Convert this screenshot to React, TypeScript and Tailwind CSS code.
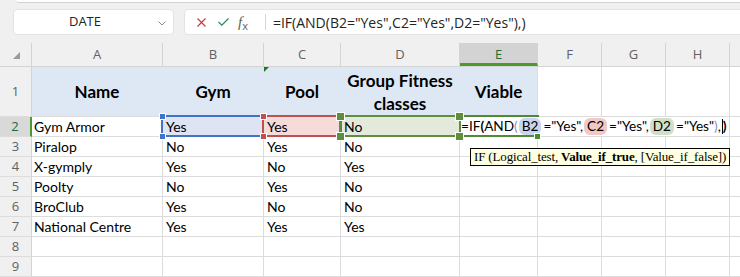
import React from "react";

const COLS = [
  { k: "A", w: "w-[131px]" },
  { k: "B", w: "w-[101px]" },
  { k: "C", w: "w-[77px]" },
  { k: "D", w: "w-[119px]" },
  { k: "E", w: "w-[78px]" },
  { k: "F", w: "w-[64px]" },
  { k: "G", w: "w-[64px]" },
  { k: "H", w: "w-[64px]" },
  { k: "", w: "w-[64px]" },
];

const DATA: string[][] = [
  ["Piralop", "No", "Yes", "No"],
  ["X-gymply", "Yes", "No", "Yes"],
  ["Poolty", "No", "Yes", "No"],
  ["BroClub", "Yes", "No", "No"],
  ["National Centre", "Yes", "Yes", "Yes"],
  [],
  [],
];

const cellFont = { fontFamily: "Lato, 'Noto Sans', sans-serif" };
const uiFont = { fontFamily: "'Open Sans', 'Noto Sans', sans-serif" };

function RowHead({ n, h, selected }: { n: number; h: string; selected?: boolean }) {
  return (
    <div
      className={`shrink-0 w-[32px] ${h} flex items-center justify-center text-[13px] border-b border-[#dcdcdc] ${
        selected
          ? "bg-[#d9d9d9] text-[#1d6b38] border-r-2 border-r-[#4a9a2c]"
          : "bg-[#f0f0f0] text-[#616161] border-r border-r-[#d4d4d4]"
      }`}
      style={uiFont}
    >
      {n}
    </div>
  );
}

function Square({ x, y, s, color }: { x: number; y: number; s: number; color: string }) {
  return (
    <div
      className="absolute border border-white"
      style={{ left: x - s / 2, top: y - s / 2, width: s, height: s, background: color }}
    />
  );
}

export default function App() {
  return (
    <div className="relative w-[740px] h-[277px] overflow-hidden bg-[#f0f0f0] text-black">
      {/* ribbon bottom edge */}
      <div className="h-[3px] ml-[16px] bg-white border-b border-[#d2d2d2] rounded-bl-[5px]" />

      {/* name box + formula bar */}
      <div className="flex items-start h-[40px] pt-[6px]">
        <div
          className="relative ml-[13px] w-[161px] h-[26px] shrink-0 bg-white rounded-[4px] border border-[#e3e3e3] flex items-center justify-center pr-[17px] text-[13px] text-[#242424]"
          style={uiFont}
        >
          DATE
          <svg className="absolute right-[7px] top-[11px]" width="8" height="5" viewBox="0 0 8 5">
            <polyline points="0.5,0.5 4,4 7.5,0.5" fill="none" stroke="#8a8a8a" strokeWidth="1" />
          </svg>
        </div>
        <div className="ml-[10px] w-[570px] h-[26px] shrink-0 bg-white rounded-[4px] border border-[#e3e3e3] flex items-center">
          <svg className="ml-[12px]" width="9" height="9" viewBox="0 0 9 9">
            <path d="M0.5 0.5 L8.5 8.5 M8.5 0.5 L0.5 8.5" stroke="#d13438" strokeWidth="1.1" fill="none" />
          </svg>
          <svg className="ml-[12px]" width="11" height="8" viewBox="0 0 11 8">
            <polyline points="0.5,4 3.8,7.2 10.5,0.5" stroke="#2f8a5a" strokeWidth="1.2" fill="none" />
          </svg>
          <span
            className="ml-[9px] text-[15px] italic text-[#616161] leading-none"
            style={{ fontFamily: "'Liberation Serif', serif" }}
          >
            f<span className="text-[11px] not-italic relative top-[3px]" style={uiFont}>x</span>
          </span>
          <div className="ml-[17px] w-px h-[16px] bg-[#d6d6d6]" />
          <span className="ml-[7px] text-[14px] text-[#242424] whitespace-nowrap" style={uiFont}>
            =IF(AND(B2="Yes",C2="Yes",D2="Yes"),)
          </span>
        </div>
      </div>

      {/* column headers */}
      <div className="flex h-[24px] border-b border-[#d4d4d4]" style={uiFont}>
        <div className="shrink-0 w-[32px] h-full flex items-end justify-end pr-[11px] pb-[7px] border-r border-[#d4d4d4]">
          <svg width="7" height="7" viewBox="0 0 7 7">
            <polygon points="7,0 7,7 0,7" fill="#9a9a9a" />
          </svg>
        </div>
        {COLS.map((c, i) => (
          <div
            key={i}
            className={`shrink-0 ${c.w} h-full flex items-center justify-center text-[13px] border-r border-r-[#d4d4d4] ${
              c.k === "E"
                ? "bg-[#d3d3d3] text-[#1d6b38] border-b-[3px] border-b-[#4a9a2c] pt-[3px]"
                : "text-[#616161]"
            }`}
          >
            {c.k}
          </div>
        ))}
      </div>

      {/* row 1 */}
      <div className="flex h-[50px] bg-white" style={cellFont}>
        <RowHead n={1} h="h-[50px]" />
        {["Name", "Gym", "Pool", "Group Fitness classes", "Viable"].map((t, i) => (
          <div
            key={i}
            className={`shrink-0 ${COLS[i].w} h-full flex items-center justify-center text-center font-bold text-[17px] leading-[23px] bg-[#dde8f4] border-b border-b-[#dcdcdc] border-r ${
              i === 4 ? "border-r-[#dcdcdc]" : "border-r-[#dde8f4]"
            } ${i === 3 ? "px-[2px]" : ""}`}
          >
            {i === 3 ? (
              <span>
                Group Fitness
                <br />
                classes
              </span>
            ) : (
              t
            )}
          </div>
        ))}
        {COLS.slice(5).map((c, i) => (
          <div key={i} className={`shrink-0 ${c.w} h-full border-r border-b border-[#dcdcdc]`} />
        ))}
      </div>

      {/* row 2 */}
      <div className="flex h-[20px] bg-white text-[14px]" style={cellFont}>
        <RowHead n={2} h="h-[20px]" selected />
        <div className={`shrink-0 ${COLS[0].w} h-full flex items-center pl-[2px] border-r border-b border-[#dcdcdc]`}>
          Gym Armor
        </div>
        <div className={`shrink-0 ${COLS[1].w} h-full flex items-center pl-[3px] bg-[#dfe4f5] border-r border-b border-[#dcdcdc]`}>
          Yes
        </div>
        <div className={`shrink-0 ${COLS[2].w} h-full flex items-center pl-[3px] bg-[#f5dcdb] border-r border-b border-[#dcdcdc]`}>
          Yes
        </div>
        <div className={`shrink-0 ${COLS[3].w} h-full flex items-center pl-[3px] bg-[#e3eadb] border-r border-b border-[#dcdcdc]`}>
          No
        </div>
        {COLS.slice(4).map((c, i) => (
          <div key={i} className={`shrink-0 ${c.w} h-full border-r border-b border-[#dcdcdc]`} />
        ))}
      </div>

      {/* rows 3-9 */}
      {DATA.map((r, ri) => (
        <div key={ri} className="flex h-[20px] bg-white text-[14px]" style={cellFont}>
          <RowHead n={ri + 3} h="h-[20px]" />
          {COLS.map((c, ci) => (
            <div
              key={ci}
              className={`shrink-0 ${c.w} h-full flex items-center whitespace-nowrap border-r border-b border-[#dcdcdc] ${
                ci === 0 ? "pl-[2px]" : "pl-[3px]"
              }`}
            >
              {r[ci] ?? ""}
            </div>
          ))}
        </div>
      ))}

      {/* error indicator on C1 */}
      <div className="absolute left-[264px] top-[67px] w-0 h-0 border-t-[5px] border-t-[#1f7a1f] border-r-[5px] border-r-transparent" />

      {/* reference range borders */}
      <div className="absolute left-[161px] top-[115px] w-[103px] h-[22px] border-2 border-[#4472c4]" />
      <div className="absolute left-[262px] top-[115px] w-[80px] h-[22px] border-2 border-[#c0504d]" />
      <div className="absolute left-[339px] top-[115px] w-[122px] h-[22px] border-2 border-[#5f8f3e]" />

      {/* in-cell edit overlay */}
      <div
        className="absolute left-[461px] top-[117px] w-[266px] h-[19px] bg-white flex items-center text-[13.6px] whitespace-nowrap"
        style={cellFont}
      >
        <span>=IF</span>
        <span className="font-bold">(</span>
        <span>AND</span>
        <span className="text-[#7d95cf]">(</span>
        <span className="ml-[1px] mr-[2px] px-[3px] rounded-[6px] bg-[#c9d5ef] leading-[17px]">B2</span>
        <span>="Yes",</span>
        <span className="ml-[1px] mr-[2px] px-[3px] rounded-[6px] bg-[#f1c8c5] leading-[17px]">C2</span>
        <span>="Yes",</span>
        <span className="ml-[1px] mr-[2px] px-[3px] rounded-[6px] bg-[#d2dfc7] leading-[17px]">D2</span>
        <span>="Yes"</span>
        <span className="text-[#7d95cf]">)</span>
        <span>,</span>
        <span className="inline-block w-px h-[15px] bg-black ml-[1px]" />
        <span className="font-bold">)</span>
      </div>

      {/* active cell E2 border */}
      <div className="absolute left-[458px] top-[115px] w-[81px] h-[2px] bg-[#4f8a35]" />
      <div className="absolute left-[458px] top-[135px] w-[81px] h-[2px] bg-[#4f8a35]" />

      {/* handles */}
      <Square x={162} y={116} s={7} color="#4472c4" />
      <Square x={162} y={136} s={7} color="#4472c4" />
      <Square x={263} y={116} s={7} color="#c0504d" />
      <Square x={263} y={136} s={7} color="#c0504d" />
      <Square x={340} y={116} s={9} color="#5f8f3e" />
      <Square x={340} y={136} s={9} color="#5f8f3e" />
      <Square x={459} y={116} s={9} color="#5f8f3e" />
      <Square x={459} y={136} s={9} color="#5f8f3e" />
      <Square x={537} y={136} s={7} color="#4f8a35" />

      {/* function tooltip */}
      <div
        className="absolute left-[470px] top-[148px] h-[18px] px-[3px] bg-[#ffffe1] border border-black flex items-center text-[13px] tracking-[-0.15px] whitespace-nowrap text-black"
        style={{ fontFamily: "'Liberation Serif', 'Times New Roman', serif" }}
      >
        IF (Logical_test, <b className="ml-[3px]">Value_if_true</b>, [Value_if_false])
      </div>
    </div>
  );
}
